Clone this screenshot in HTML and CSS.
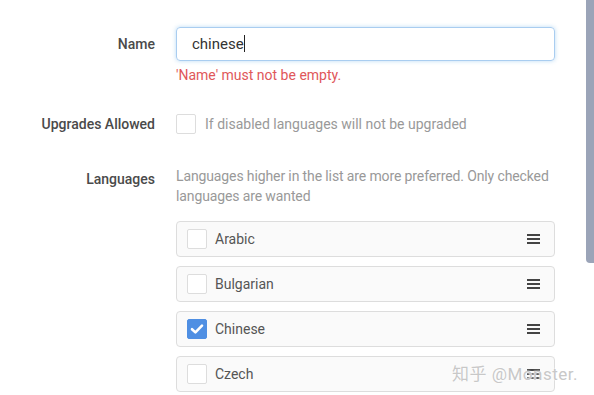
FILE: index.html
```html
<!DOCTYPE html>
<html>
<head>
    <title>Profile</title>
    <link rel="stylesheet" href="styles.css">
</head>
<body>
    <form class="profile-form">
        <div class="form-row name-row">
            <label class="form-label">Name</label>
            <div class="form-field">
                <div class="text-input">chinese<span class="caret"></span></div>
                <div class="error-text">'Name' must not be empty.</div>
            </div>
        </div>

        <div class="form-row upgrade-row">
            <label class="form-label">Upgrades Allowed</label>
            <div class="form-field inline-field">
                <span class="checkbox"></span>
                <span class="help-text">If disabled languages will not be upgraded</span>
            </div>
        </div>

        <div class="form-row languages-row">
            <label class="form-label languages-label">Languages</label>
            <div class="form-field">
                <div class="help-text block-help">Languages higher in the list are more preferred. Only checked languages are wanted</div>
                <ul class="language-list">
                    <li class="language-item">
                        <span class="checkbox"></span>
                        <span class="language-name">Arabic</span>
                        <span class="drag-handle"></span>
                    </li>
                    <li class="language-item">
                        <span class="checkbox"></span>
                        <span class="language-name">Bulgarian</span>
                        <span class="drag-handle"></span>
                    </li>
                    <li class="language-item">
                        <span class="checkbox checked">
                            <svg width="14" height="12" viewBox="0 0 14 12"><path d="M2 6.2 L5.4 9.4 L12 2.6" fill="none" stroke="#fff" stroke-width="2.6" stroke-linecap="round" stroke-linejoin="round"/></svg>
                        </span>
                        <span class="language-name">Chinese</span>
                        <span class="drag-handle"></span>
                    </li>
                    <li class="language-item">
                        <span class="checkbox"></span>
                        <span class="language-name">Czech</span>
                        <span class="drag-handle"></span>
                    </li>
                </ul>
            </div>
        </div>
    </form>

    <div class="scroll-thumb"></div>
    <div class="watermark">知乎 @Monster.</div>
</body>
</html>
```

FILE: styles.css
```css
body {
    margin: 0;
    background-color: #fff;
    color: #333;
    font-family: Roboto, "Noto Sans CJK SC", sans-serif;
    font-size: 14px;
    overflow: hidden;
}

.profile-form {
    padding-top: 27px;
}

.form-row {
    display: flex;
}

.form-label {
    width: 155px;
    margin-right: 21px;
    flex-shrink: 0;
    text-align: right;
    font-weight: 500;
    color: #4a4a4a;
    line-height: 20px;
}

.form-field {
    width: 379px;
}

/* name */
.name-row .form-label {
    padding-top: 7px;
}

.text-input {
    height: 34px;
    box-sizing: border-box;
    padding: 0 15px;
    border: 1px solid #a9cdf0;
    border-radius: 4px;
    box-shadow: 0 0 4px rgba(102, 175, 233, 0.45);
    font-size: 15px;
    line-height: 32px;
    color: #333;
}

.caret {
    display: inline-block;
    width: 1px;
    height: 17px;
    background-color: #222;
    vertical-align: -3px;
}

.error-text {
    margin-top: 4px;
    color: #e0575a;
    line-height: 20px;
}

/* upgrades */
.upgrade-row {
    margin-top: 29px;
}

.inline-field {
    display: flex;
    align-items: center;
}

.checkbox {
    display: inline-flex;
    align-items: center;
    justify-content: center;
    width: 20px;
    height: 20px;
    box-sizing: border-box;
    border: 1px solid #ddd;
    border-radius: 2px;
    background-color: #fff;
    flex-shrink: 0;
}

.checkbox.checked {
    background-color: #4f8fe3;
    border-color: #4f8fe3;
}

.help-text {
    color: #999;
    line-height: 20px;
}

.inline-field .help-text {
    margin-left: 9px;
}

/* languages */
.languages-row {
    margin-top: 32px;
}

.languages-label {
    padding-top: 3px;
}

.block-help {
    letter-spacing: -0.12px;
}

.language-list {
    list-style: none;
    margin: 15px 0 0;
    padding: 0;
}

.language-item {
    display: flex;
    align-items: center;
    height: 36px;
    box-sizing: border-box;
    margin-bottom: 9px;
    padding: 0 14px 0 10px;
    border: 1px solid #ddd;
    border-radius: 4px;
    background-color: #fafafa;
}

.language-name {
    flex: 1;
    margin-left: 8px;
    font-size: 14px;
    color: #555;
}

.drag-handle {
    width: 13px;
    height: 6px;
    border-top: 2px solid #444;
    border-bottom: 2px solid #444;
    position: relative;
}

.drag-handle::after {
    content: "";
    position: absolute;
    left: 0;
    right: 0;
    top: 2px;
    height: 2px;
    background-color: #444;
}

/* overlays */
.scroll-thumb {
    position: absolute;
    top: 0;
    right: 0;
    width: 8px;
    height: 263px;
    background-color: #9ba4b8;
    border-radius: 0 0 0 4px;
}

.watermark {
    position: absolute;
    left: 452px;
    top: 360px;
    font-size: 17px;
    color: #c8c8c8;
    letter-spacing: 0.5px;
    text-shadow: 0 0 2px #fff, 0 0 2px #fff;
}
```
